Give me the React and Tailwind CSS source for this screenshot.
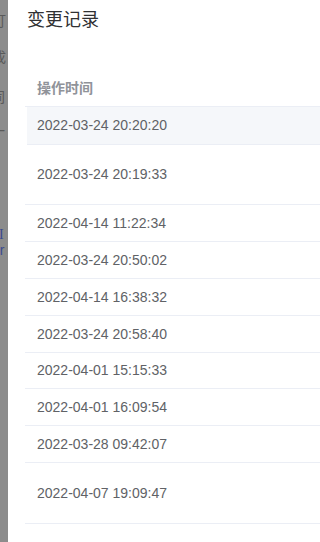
import React from "react";

const ROWS = [
  { time: "2022-03-24 20:20:20", h: "h-[38px]", active: true },
  { time: "2022-03-24 20:19:33", h: "h-[60px]" },
  { time: "2022-04-14 11:22:34", h: "h-[37px]" },
  { time: "2022-03-24 20:50:02", h: "h-[37px]" },
  { time: "2022-04-14 16:38:32", h: "h-[37px]" },
  { time: "2022-03-24 20:58:40", h: "h-[37px]" },
  { time: "2022-04-01 15:15:33", h: "h-[36px]" },
  { time: "2022-04-01 16:09:54", h: "h-[37px]" },
  { time: "2022-03-28 09:42:07", h: "h-[37px]" },
  { time: "2022-04-07 19:09:47", h: "h-[61px]" },
];

const FONT = "font-['Liberation_Sans','Noto_Sans_CJK_SC',sans-serif]";

// 遮罩下露出的页面边缘
function Backdrop() {
  return (
    <div className="w-[8px] shrink-0 overflow-hidden bg-[#8c8c8c] text-[14px] leading-none text-[#5a5a5a]">
      <div className="flex flex-col">
        <span className="mt-[14px] -ml-[8px] whitespace-nowrap">订</span>
        <span className="mt-[22px] -ml-[8px] whitespace-nowrap">成</span>
        <span className="mt-[26px] -ml-[9px] whitespace-nowrap">同</span>
        <span className="mt-[20px] -ml-[9px] whitespace-nowrap">一</span>
        <span className="mt-[90px] -ml-[1px] whitespace-nowrap font-['Liberation_Serif',serif] text-[#3b4a8f]">I</span>
        <span className="mt-[1px] -ml-[8px] whitespace-nowrap text-[#3b4a8f]">er</span>
      </div>
    </div>
  );
}

export default function App() {
  return (
    <div className={`flex w-full h-[542px] overflow-hidden bg-white ${FONT}`}>
      <Backdrop />
      <div className="flex-1 min-w-0 bg-white flex flex-col">
        {/* 标题 */}
        <div className="h-[70px] pl-[19px] pt-[8px]">
          <span className="text-[18px] leading-[24px] text-[#303133]">变更记录</span>
        </div>

        {/* 表格 */}
        <div className="ml-[17px]">
          <div className="h-[37px] flex items-center pl-[12px] border-b border-[#ebeef5]">
            <span className="text-[14px] font-bold text-[#909399]">操作时间</span>
          </div>
          {ROWS.map((row) =>
            row.active ? (
              <div
                key={row.time}
                className={`${row.h} flex items-center ml-[2px] pl-[10px] border-b border-[#ebeef5] bg-[#f5f7fa]`}
              >
                <span className="text-[14px] text-[#606266]">{row.time}</span>
              </div>
            ) : (
              <div
                key={row.time}
                className={`${row.h} flex items-center pl-[12px] border-b border-[#ebeef5]`}
              >
                <span className="text-[14px] text-[#606266]">{row.time}</span>
              </div>
            )
          )}
        </div>
      </div>
    </div>
  );
}
